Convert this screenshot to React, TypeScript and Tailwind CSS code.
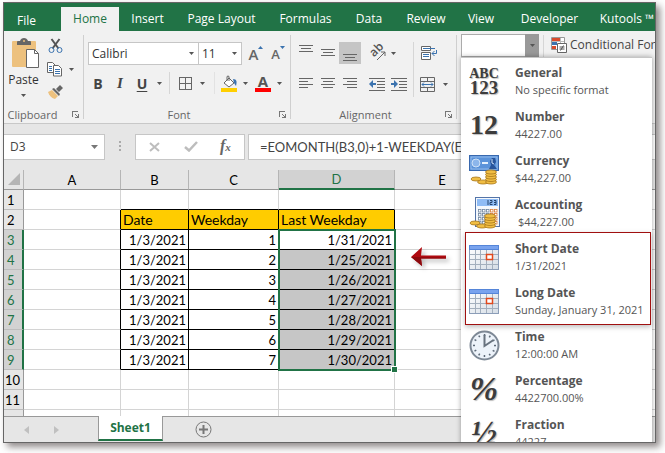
import type { ReactNode } from "react";

const UI = "font-['Open_Sans','Noto_Sans',sans-serif]";
const CELL = "font-['Lato','Liberation_Sans',sans-serif]";

function Caret({ className = "" }: { className?: string }) {
  return (
    <svg width="5" height="3" viewBox="0 0 5 3" className={`shrink-0 ${className}`} aria-hidden="true">
      <path d="M0 0h5L2.500 3z" fill="#555" />
    </svg>
  );
}

function Tool({ label, className = "w-[22px]", children }: { label: string; className?: string; children: ReactNode }) {
  return (
    <button type="button" aria-label={label} className={`flex h-[22px] shrink-0 items-center justify-center ${className}`}>
      {children}
    </button>
  );
}

function Launcher() {
  return (
    <button type="button" aria-label="More settings" className="absolute right-1 bottom-px">
      <svg width="7" height="7" viewBox="0 0 7 7" fill="none" stroke="#777" shapeRendering="crispEdges" className="block">
        <path d="M.5 6V.5H6" />
        <path d="M3 3l3 3" shapeRendering="auto" />
        <path d="M6.500 3v3.500H3" />
      </svg>
    </button>
  );
}

function Group({ name, className, children }: { name: string; className: string; children: ReactNode }) {
  return (
    <section className={`relative flex h-[84px] shrink-0 flex-col border-r border-[#cfcfcf] ${className}`}>
      <div className="h-[72px] shrink-0">{children}</div>
      <h2 className="text-center text-[11px] leading-4 text-[#666]">{name}</h2>
      <Launcher />
    </section>
  );
}

function Lines({ widths, align, top = 2 }: { widths: number[]; align: "l" | "c" | "r"; top?: number }) {
  return (
    <svg width="14" height="16" viewBox="0 0 14 16" fill="#666" shapeRendering="crispEdges" aria-hidden="true">
      {widths.map((w, i) => (
        <rect key={i} x={align === "l" ? 0 : align === "r" ? 14 - w : (14 - w) / 2} y={top + i * 3} width={w} height="1" />
      ))}
    </svg>
  );
}

function Indent({ flip }: { flip?: boolean }) {
  return (
    <svg width="17" height="14" viewBox="0 0 17 14" aria-hidden="true">
      <g fill="#666" shapeRendering="crispEdges">
        <rect y="1" x="1" width="16" height="1" />
        <rect y="4" x="9" width="8" height="1" />
        <rect y="7" x="9" width="8" height="1" />
        <rect y="10" x="9" width="8" height="1" />
        <rect y="13" x="1" width="16" height="1" />
      </g>
      <path d={flip ? "M1 6h3V3l4 4-4 4V8H1z" : "M8 6H5V3L1 7l4 4V8h3z"} fill="#3b73af" />
    </svg>
  );
}

function Clipboard() {
  return (
    <Group name="Clipboard" className="w-20 [&>h2]:pr-[22px]">
      <div className="flex">
        <button type="button" className="flex w-[39px] flex-col items-center pt-[3px] text-[12px] leading-4 text-[#333]">
          <svg width="29" height="31" viewBox="0 0 29 31" className="ml-1" aria-hidden="true">
            <rect x="1" y="3" width="24" height="26" rx="1" fill="#edc17e" />
            <path d="M6 7V4q0-1 1-1h2c1-4 7-4 8 0h2q1 0 1 1v3z" fill="#666" />
            <circle cx="13" cy="3" r="1" fill="#edc17e" />
            <path d="M15.500 11.500h8l4 4v14h-12z" fill="#fff" stroke="#666" />
            <path d="M23.500 11.500v4h4" fill="none" stroke="#666" />
          </svg>
          <span className="mt-[3px]">Paste</span>
          <Caret className="mt-[6px]" />
        </button>
        <div className="ml-px flex flex-col gap-px">
          <Tool label="Cut">
            <svg width="15" height="16" viewBox="0 0 15 16" fill="none" aria-hidden="true">
              <path d="M3.500 1l7 9.500M11.500 1l-7 9.500" stroke="#555" strokeWidth="2" />
              <circle cx="3.500" cy="12" r="2.500" stroke="#3b73af" />
              <circle cx="11.500" cy="12" r="2.500" stroke="#3b73af" />
            </svg>
          </Tool>
          <Tool label="Copy" className="w-8 gap-[6px]">
            <svg width="16" height="15" viewBox="0 0 16 15" fill="#fff" stroke="#666" aria-hidden="true">
              <path d="M.5 .5h5l3 3v7h-8z" />
              <path d="M2 4.500h3M2 6.500h3M2 8.500h3" stroke="#3b73af" />
              <path d="M6.500 3.500h5l3 3v7.500h-8z" />
              <path d="M8 7.500h5M8 9.500h5M8 11.500h5" stroke="#3b73af" />
            </svg>
            <Caret />
          </Tool>
          <Tool label="Format Painter">
            <svg width="17" height="15" viewBox="0 0 17 15" aria-hidden="true">
              <path d="M1 7l4-2 6 6-3 3c-4-1-6-4-7-7z" fill="#edc17e" />
              <path d="M5 4l2-1 6 6-1 2zM9 4l4-4 3 3-4 4z" fill="#666" />
            </svg>
          </Tool>
        </div>
      </div>
    </Group>
  );
}

function FontGroup() {
  return (
    <Group name="Font" className="w-[207px] [&>h2]:pr-4">
      <div className="flex h-[30px] items-end pl-1">
        <label className="relative">
          <span className="sr-only">Font name</span>
          <select className="block h-[23px] w-[111px] appearance-none border border-[#c6c6c6] bg-white pl-[3px] text-[12px] leading-[21px] text-[#333]">
            <option>Calibri</option>
          </select>
          <Caret className="absolute top-[10px] right-[5px]" />
        </label>
        <label className="relative -ml-px">
          <span className="sr-only">Font size</span>
          <select className="block h-[23px] w-11 appearance-none border border-[#c6c6c6] bg-white pl-[3px] text-[12px] leading-[21px] text-[#333]">
            <option>11</option>
          </select>
          <Caret className="absolute top-[10px] right-[5px]" />
        </label>
        <Tool label="Increase Font Size" className="ml-[5px] w-[18px] text-[15px] leading-[22px] font-semibold text-[#666]">
          <span>A</span>
          <svg width="5" height="3" viewBox="0 0 5 3" className="mb-[14px]" aria-hidden="true"><path d="M0 3h5L2.500 0z" fill="#3b73af" /></svg>
        </Tool>
        <Tool label="Decrease Font Size" className="ml-1 w-[18px] text-[13px] leading-[22px] font-semibold text-[#666]">
          <span>A</span>
          <svg width="5" height="3" viewBox="0 0 5 3" className="mb-[14px]" aria-hidden="true"><path d="M0 0h5L2.500 3z" fill="#3b73af" /></svg>
        </Tool>
      </div>
      <div className="mt-[7px] flex items-center pl-[3px] text-[14px] font-bold text-[#444]">
        <Tool label="Bold">B</Tool>
        <Tool label="Italic"><span className="font-['Liberation_Serif',serif] text-[15px] italic">I</span></Tool>
        <Tool label="Underline"><span className="underline underline-offset-2">U</span></Tool>
        <Tool label="Underline style" className="w-3"><Caret /></Tool>
        <span className="mx-1 h-[22px] w-px bg-[#d6d6d6]" />
        <Tool label="Borders">
          <svg width="13" height="13" viewBox="0 0 13 13" fill="none" stroke="#666" shapeRendering="crispEdges"><path d="M.5 .5h12v12H.5zM6.500 0v13M0 6.500h13" /></svg>
        </Tool>
        <Tool label="Border style" className="w-3"><Caret /></Tool>
        <span className="mr-1 ml-[6px] h-[22px] w-px bg-[#e2e2e2]" />
        <Tool label="Fill Color" className="w-5">
          <svg width="17" height="17" viewBox="0 0 17 17" aria-hidden="true">
            <path d="M3 8l5-5 5 5-5 4z" fill="#fff" stroke="#666" />
            <path d="M6 6V1.500q1-1 2 0V6" fill="none" stroke="#666" />
            <path d="M12 4c4 0 4 3 3 7l-2-3z" fill="#3b73af" />
            <rect y="13" width="16" height="4" fill="#ffcf00" />
          </svg>
        </Tool>
        <Tool label="Fill choices" className="w-3"><Caret /></Tool>
        <Tool label="Font Color" className="ml-[2px] w-5">
          <span className="w-4 border-b-4 border-[#f00] text-center text-[15px] leading-[13px] text-[#555]">A</span>
        </Tool>
        <Tool label="Font color choices" className="w-3"><Caret /></Tool>
      </div>
    </Group>
  );
}

function Alignment() {
  return (
    <Group name="Alignment" className="w-[166px] [&>h2]:pr-4">
      <div className="flex pt-[7px] pl-1">
        <div className="flex flex-col gap-[9px]">
          <div className="flex">
            <Tool label="Top Align"><Lines widths={[14, 10, 14]} align="c" top={0} /></Tool>
            <Tool label="Middle Align"><Lines widths={[14, 10, 14]} align="c" top={4} /></Tool>
            <Tool label="Bottom Align" className="w-[22px] bg-[#c5c5c5]"><Lines widths={[14, 10, 14]} align="c" top={9} /></Tool>
            <Tool label="Orientation" className="ml-[5px] w-8 gap-1">
              <svg width="18" height="18" viewBox="0 0 18 18" fill="none" aria-hidden="true">
                <text x="4" y="13" transform="rotate(-45 5 12)" fontSize="12" fontWeight="600" fill="#555">ab</text>
                <path d="M8 16l8-8M12 8h4v4" stroke="#666" />
              </svg>
              <Caret />
            </Tool>
          </div>
          <div className="flex">
            <Tool label="Align Left"><Lines widths={[14, 9, 14, 9]} align="l" /></Tool>
            <Tool label="Center"><Lines widths={[14, 10, 14, 10]} align="c" /></Tool>
            <Tool label="Align Right"><Lines widths={[14, 10, 14, 10]} align="r" /></Tool>
            <Tool label="Decrease Indent" className="ml-1 w-[22px]"><Indent /></Tool>
            <Tool label="Increase Indent"><Indent flip /></Tool>
          </div>
        </div>
        <span className="ml-1 h-[55px] w-px bg-[#d6d6d6]" />
        <div className="ml-1 flex flex-col gap-[9px]">
          <Tool label="Wrap Text">
            <svg width="17" height="16" viewBox="0 0 17 16" fill="none" aria-hidden="true">
              <path d="M.5 1.500h9v4h-9zM.5 7.500h9v7h-9z" fill="#fff" stroke="#666" />
              <path d="M2 3.500h12M2 9.500h6M2 11.500h6" stroke="#3b73af" />
              <path d="M15.500 5v3.500H11M13.500 6L11 8.500l2.500 2.500" stroke="#3b73af" />
            </svg>
          </Tool>
          <Tool label="Merge and Center" className="w-8 gap-2">
            <svg width="15" height="15" viewBox="0 0 15 15" fill="none" stroke="#666" aria-hidden="true">
              <path d="M.5 .5h14v14H.5zM.5 4.500h14M.5 10.500h14M7.500 1v3M7.500 11v3" />
              <path d="M2 7.500h11M4 5.500l-2 2 2 2M11 5.500l2 2-2 2" stroke="#3b73af" />
            </svg>
            <Caret />
          </Tool>
        </div>
      </div>
    </Group>
  );
}

function Calendar() {
  return (
    <svg width="30" height="25" viewBox="0 0 30 25" aria-hidden="true">
      <defs><linearGradient id="cal" x1="0" y1="0" x2="1" y2="1"><stop stopColor="#fff" /><stop offset="1" stopColor="#d5dde6" /></linearGradient></defs>
      <rect x=".5" y=".5" width="29" height="24" fill="url(#cal)" stroke="#8b9db8" />
      <path d="M6.500 5v19M11.500 5v19M17.500 5v19M23.500 5v19M1 9.500h28M1 14.500h28M1 19.500h28" stroke="#a3afbd" />
      <rect width="30" height="5" fill="#5585d8" />
      <rect x="1" y="1" width="28" height="3" fill="#79a3ee" />
      <rect x="17.500" y="9.500" width="6" height="5" fill="#fff" stroke="#e2481c" strokeWidth="1.500" />
    </svg>
  );
}

function Coins() {
  return (
    <g fill="#f0bd43" stroke="#a8771c" strokeWidth=".8">
      <ellipse cx="7" cy="26" rx="5" ry="2" />
      <ellipse cx="14" cy="29" rx="5.500" ry="2" />
      {[29, 26.5, 24, 21.5, 19].map((y) => <ellipse key={y} cx="22" cy={y} rx="5.500" ry="2" />)}
    </g>
  );
}

function Currency() {
  return (
    <svg width="31" height="32" viewBox="0 0 31 32" aria-hidden="true">
      <rect x=".5" y="2.500" width="29" height="15" fill="#5b93da" stroke="#3868ae" />
      <rect x="2" y="4" width="26" height="12" fill="none" stroke="#b7d4f5" strokeWidth=".6" />
      <circle cx="7" cy="10" r="4" fill="#8cb6eb" stroke="#cfe2f8" />
      <path d="M13 10h6" stroke="#e4f0fd" strokeWidth="2" />
      <path d="M20 16l2-4-1-4 2-3h3l1 4-2 3 3 4z" fill="#27549b" />
      <path d="M23 6v4l2 1" stroke="#cfe2f8" fill="none" />
      <Coins />
    </svg>
  );
}

function Accounting() {
  return (
    <svg width="32" height="32" viewBox="0 0 32 32" aria-hidden="true">
      <rect x="7.500" y=".5" width="24" height="29" fill="#f4f8fd" stroke="#5474a8" />
      <rect x="9" y="2" width="21" height="7" fill="#8fbcf5" />
      <path d="M20 3v5M22 3.500h2v2h-2v2h2.500M26 3.500h2v4h-2M26 5.500h2" stroke="#24446f" fill="none" />
      {[12, 16, 20, 24].map((y) => [10, 14, 18, 22, 26].map((x) => (
        <rect key={`${x}-${y}`} x={x + 0.5} y={y + 0.5} width="2.500" height="2.500" fill="#fff" stroke={x > 21 ? "#dc7b35" : "#71869f"} strokeWidth=".8" />
      )))}
      <Coins />
    </svg>
  );
}

function Clock() {
  return (
    <svg width="31" height="31" viewBox="0 0 31 31" aria-hidden="true">
      <circle cx="15.500" cy="15.500" r="14" fill="#edf3fa" stroke="#7e8996" strokeWidth="2" />
      {Array.from({ length: 12 }, (_, i) => (
        <rect key={i} x="14.800" y="4" width="1.500" height="2" fill="#5d6977" transform={`rotate(${i * 30} 15.500 15.500)`} />
      ))}
      <path d="M15.500 5v11l9-6" fill="none" stroke="#68737f" strokeWidth="2" />
    </svg>
  );
}

const GLYPH = "font-['Liberation_Serif',serif] font-bold text-[#3c3c3c] [text-shadow:1px_1px_1px_#bbb]";

const formats: { title: string; sample: string; icon: ReactNode; pad?: boolean }[] = [
  { title: "General", sample: "No specific format", icon: <span className={`${GLYPH} flex flex-col items-center text-[14px] leading-[14px]`}><span>ABC</span><span className="text-[19px]">123</span></span> },
  { title: "Number", sample: "44227.00", icon: <span className={`${GLYPH} text-[28px] leading-7`}>12</span> },
  { title: "Currency", sample: "$44,227.00", icon: <Currency /> },
  { title: "Accounting", sample: "$44,227.00", icon: <Accounting />, pad: true },
  { title: "Short Date", sample: "1/31/2021", icon: <Calendar /> },
  { title: "Long Date", sample: "Sunday, January 31, 2021", icon: <Calendar /> },
  { title: "Time", sample: "12:00:00 AM", icon: <Clock /> },
  { title: "Percentage", sample: "4422700.00%", icon: <span className={`${GLYPH} text-[34px] leading-8 italic`}>%</span> },
  { title: "Fraction", sample: "44227", icon: <span className={`${GLYPH} text-[34px] leading-8 italic`}>½</span> },
];

function FormatItem({ title, sample, icon, pad }: (typeof formats)[number]) {
  return (
    <button type="button" role="option" aria-selected="false" className="flex h-11 w-full items-center text-left">
      <span className="ml-[7px] flex w-8 shrink-0 justify-center">{icon}</span>
      <span className="ml-[15px] flex flex-col whitespace-nowrap text-[12px] leading-[17px] text-[#555]">
        <strong>{title}</strong>
        <span className={`text-[11px] ${pad ? "pl-[3px]" : ""}`}>{sample}</span>
      </span>
    </button>
  );
}

function FormatMenu() {
  return (
    <div role="listbox" aria-label="Number formats" className="absolute top-[23px] left-0 z-10 h-[400px] w-[191px] border-t border-[#c6c6c6] bg-white pt-px shadow-[0_0_5px_rgba(0,0,0,0.35)]">
      {formats.slice(0, 4).map((f) => <FormatItem key={f.title} {...f} />)}
      <div className="relative">
        <div className="pointer-events-none absolute -top-[3px] right-px -bottom-[2px] left-1 border border-[#a01010] shadow-[0_2px_5px_rgba(0,0,0,0.25)]" />
        {formats.slice(4, 6).map((f) => <FormatItem key={f.title} {...f} />)}
      </div>
      {formats.slice(6).map((f) => <FormatItem key={f.title} {...f} />)}
    </div>
  );
}

function NumberGroup() {
  return (
    <section className="relative flex h-[84px] min-w-0 flex-1 items-start pl-1" aria-label="Number">
      <div className="relative -mt-px">
        <label className="relative block">
          <span className="sr-only">Number format</span>
          <select className="block h-[23px] w-[78px] appearance-none border border-[#ababab] bg-white" defaultValue=""><option value="" /></select>
          <span className="pointer-events-none absolute top-0 right-0 flex h-[23px] w-[14px] items-center justify-center bg-[#999]"><Caret /></span>
        </label>
        <FormatMenu />
      </div>
      <span className="ml-1 h-full w-px shrink-0 bg-[#d6d6d6]" />
      <button type="button" className="ml-[7px] flex h-5 items-center gap-[3px] whitespace-nowrap text-[12px] text-[#444]">
        <svg width="16" height="16" viewBox="0 0 16 16" className="shrink-0" aria-hidden="true">
          <path d="M.5 .5h13v12H.5z" fill="#fff" stroke="#999" />
          <path d="M1 1h8v3H1z" fill="#d94b2b" /><path d="M1 5h5v3H1z" fill="#3b73af" /><path d="M1 9h4v3H1z" fill="#d94b2b" />
          <path d="M1 4.500h12M9.500 1v5" stroke="#bbb" />
          <path d="M6.500 6.500h9v9h-9z" fill="#fff" stroke="#666" />
          <path d="M8.500 10h5M8.500 12h5M12.500 8.500l-3 5" stroke="#555" />
        </svg>
        Conditional Formatting
      </button>
    </section>
  );
}

const tabs: [string, string][] = [
  ["File", "w-[57px] pr-3 pt-1"],
  ["Home", "w-[58px] bg-[#f1f1f1] text-[#217346]"],
  ["Insert", "w-[57px]"],
  ["Page Layout", "w-[91px]"],
  ["Formulas", "w-[77px]"],
  ["Data", "w-[50px]"],
  ["Review", "w-[64px]"],
  ["View", "w-[46px]"],
  ["Developer", "w-[91px]"],
  ["Kutools ™", "w-[64px]"],
];

const results = ["1/31/2021", "1/25/2021", "1/26/2021", "1/27/2021", "1/28/2021", "1/29/2021", "1/30/2021"];
const rowLine = "border-b border-[#d4d4d4]";
const cell = "border-r border-b border-[#d4d4d4]";
const dark = "border-r border-b border-black";
const rowHead = "border-r border-b border-r-[#999] border-b-[#bdbdbd] bg-[#e6e6e6] text-left font-normal";

function EmptyRow({ n }: { n?: number }) {
  const edge = n === 1 ? "border-r border-b border-r-[#d4d4d4] border-b-black" : cell;
  return (
    <tr>
      <th scope="row" className={`${rowHead} ${n && n > 9 ? "pl-px" : "pl-[3px]"}`}>{n}</th>
      <td className={cell} />
      <td className={edge} />
      <td className={edge} />
      <td className={edge} />
      <td className={rowLine} />
    </tr>
  );
}

function Sheet() {
  const head = "h-[20px] border-r border-b border-r-[#b5b5b5] border-b-[#999] bg-[#e6e6e6] font-normal";
  const label = `${dark} bg-[#ffcc00] pl-[2px] text-[14px]`;
  return (
    <div className="relative h-[246px] overflow-hidden bg-white">
      <table className={`w-full table-fixed border-separate border-spacing-0 text-[13px] leading-[18px] text-black ${CELL} [&_td]:h-5 [&_td]:py-0 [&_th]:py-0`}>
        <colgroup>
          <col className="w-5" /><col className="w-[97px]" /><col className="w-[68px]" /><col className="w-[90px]" /><col className="w-[116px]" /><col />
        </colgroup>
        <thead>
          <tr>
            <th className={`${head} border-r-[#999] align-bottom`} aria-label="Select all">
              <svg width="12" height="12" viewBox="0 0 12 12" className="mb-1 ml-1 block"><path d="M12 0v12H0z" fill="#b5b5b5" /></svg>
            </th>
            {["A", "B", "C"].map((c) => <th key={c} scope="col" className={head}>{c}</th>)}
            <th scope="col" className="border-r border-b-2 border-r-[#b5b5b5] border-b-[#217346] bg-[#d2d2d2] font-normal text-[#217346]">D</th>
            <th scope="col" className="border-b border-[#999] bg-[#e6e6e6] pr-[166px] font-normal">E</th>
          </tr>
        </thead>
        <tbody>
          <EmptyRow n={1} />
          <tr className="text-left">
            <th scope="row" className={`${rowHead} pl-[3px]`}>2</th>
            <td className="border-r border-b border-r-black border-b-[#d4d4d4]" />
            <td className={label}>Date</td>
            <td className={label}>Weekday</td>
            <td className={label}>Last Weekday</td>
            <td className={rowLine} />
          </tr>
          {results.map((r, i) => (
            <tr key={r} className="text-right">
              <th scope="row" className="border-r-2 border-b border-r-[#217346] border-b-[#bdbdbd] bg-[#d2d2d2] pl-[3px] text-left font-normal text-[#217346]">{i + 3}</th>
              <td className="border-r border-b border-r-black border-b-[#d4d4d4]" />
              <td className={`${dark} pr-[2px]`}>1/3/2021</td>
              <td className={`${dark} pr-[2px]`}>{i + 1}</td>
              <td className={`${dark} relative pr-[2px] ${i > 0 ? "bg-[#c6c6c6]" : ""}`}>
                {r}
                {i === 0 && (
                  <span className="pointer-events-none absolute -top-px -left-px z-[1] h-[142px] w-[118px] border-2 border-[#217346]">
                    <span className="absolute -right-1 -bottom-1 h-[7px] w-[7px] border border-white bg-[#217346]" />
                  </span>
                )}
              </td>
              <td className={rowLine} />
            </tr>
          ))}
          <EmptyRow n={10} />
          <EmptyRow n={11} />
          <EmptyRow />
        </tbody>
      </table>
      <svg width="36" height="22" viewBox="0 0 36 22" className="absolute top-[76px] left-[407px] drop-shadow-[3px_3px_2px_rgba(0,0,0,0.25)]" aria-hidden="true">
        <path d="M0 11L11 1 10 9.500h25v3H10L11 20z" fill="#b00a10" />
        <path d="M0 11L11 20 10 12.500h25v-1z" fill="#8c0a0e" />
      </svg>
    </div>
  );
}

function FormulaBar() {
  return (
    <div className="flex h-[46px] items-center bg-[#e6e6e6] pb-px text-[#444]">
      <label className="relative">
        <span className="sr-only">Name box</span>
        <input defaultValue="D3" className="block h-[26px] w-[101px] border border-l-0 border-[#c6c6c6] bg-white pl-[6px] text-[12px]" />
        <svg width="7" height="4" viewBox="0 0 7 4" className="absolute top-[11px] right-[7px]" aria-hidden="true"><path d="M0 0h7L3.500 4z" fill="#777" /></svg>
      </label>
      <svg width="2" height="11" viewBox="0 0 2 11" className="ml-[14px] shrink-0" fill="#aaa" aria-hidden="true"><path d="M0 0h2v2H0zM0 4h2v2H0zM0 8h2v2H0z" /></svg>
      <div className="ml-[14px] flex h-[26px] w-[110px] shrink-0 items-center border border-[#c6c6c6] bg-white">
        <button type="button" aria-label="Cancel" className="ml-[13px]">
          <svg width="11" height="10" viewBox="0 0 11 10" fill="none" stroke="#bdbdbd" strokeWidth="2"><path d="M1 1l9 8M10 1L1 9" /></svg>
        </button>
        <button type="button" aria-label="Enter" className="ml-6">
          <svg width="14" height="11" viewBox="0 0 14 11" fill="none" stroke="#bdbdbd" strokeWidth="2.500"><path d="M1 6l4 3.500L13 1" /></svg>
        </button>
        <button type="button" className="ml-[22px] font-['Liberation_Serif',serif] text-[16px] leading-5 font-bold text-[#666] italic">f<span className="text-[11px]">x</span></button>
      </div>
      <label className="ml-[3px] min-w-0 flex-1">
        <span className="sr-only">Formula</span>
        <input defaultValue="=EOMONTH(B3,0)+1-WEEKDAY(EOMONTH(B3,0),2)" className={`block h-[26px] w-full border border-r-0 border-[#c6c6c6] bg-white pl-[11px] text-[13px] ${CELL}`} />
      </label>
    </div>
  );
}

export default function App() {
  return (
    <div className={`overflow-hidden bg-white pt-[2px] pr-[9px] pb-[10px] pl-[3px] ${UI}`}>
      <main className="relative overflow-hidden border border-[#666] shadow-[4px_4px_7px_rgba(70,60,60,0.6)]">
        <nav className="flex h-7 items-end overflow-hidden bg-[#217346] text-[12px] text-white">
          {tabs.map(([name, style]) => (
            <button key={name} type="button" className={`flex h-6 shrink-0 items-center justify-center whitespace-nowrap ${style}`}>{name}</button>
          ))}
        </nav>
        <div className="flex h-[93px] items-start border-b border-[#c8c8c8] bg-[#f1f1f1] pt-1">
          <Clipboard />
          <FontGroup />
          <Alignment />
          <NumberGroup />
        </div>
        <FormulaBar />
        <Sheet />
        <footer className="flex h-[26px] items-stretch border-t border-[#999] bg-[#e6e6e6]">
          <button type="button" aria-label="Previous sheet" className="ml-5 w-[6px]"><svg width="5" height="8" viewBox="0 0 5 8"><path d="M5 0v8L0 4z" fill="#c0c0c0" /></svg></button>
          <button type="button" aria-label="Next sheet" className="ml-6 w-[6px]"><svg width="5" height="8" viewBox="0 0 5 8"><path d="M0 0v8l5-4z" fill="#c0c0c0" /></svg></button>
          <button type="button" className="-mt-px mb-px ml-[38px] w-[65px] border-x border-b-2 border-x-[#999] border-b-[#217346] bg-white text-[12px] font-bold text-[#217346]">Sheet1</button>
          <button type="button" aria-label="New sheet" className="ml-8">
            <svg width="17" height="17" viewBox="0 0 17 17" fill="none" stroke="#777"><circle cx="8.500" cy="8.500" r="7.500" /><path d="M8.500 4v9M4 8.500h9" strokeWidth="2" /></svg>
          </button>
        </footer>
      </main>
    </div>
  );
}
